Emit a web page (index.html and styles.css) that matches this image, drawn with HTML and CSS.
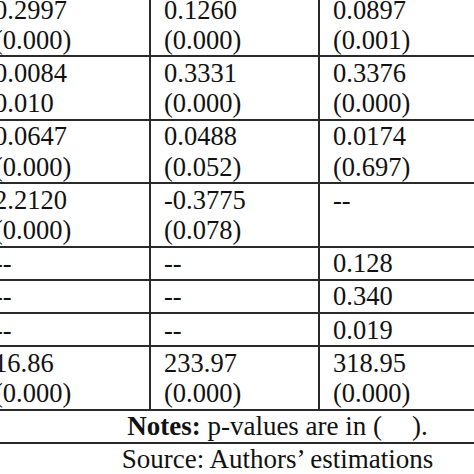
FILE: index.html
```html
<!DOCTYPE html>
<html>
<head>
<meta charset="utf-8">
<link rel="stylesheet" href="styles.css">
</head>
<body>
<div class="frame">
<table class="results">
  <colgroup>
    <col class="c1"><col class="c2"><col class="c3">
  </colgroup>
  <tbody>
    <tr><td>0.2997<br>(0.000)</td><td>0.1260<br>(0.000)</td><td>0.0897<br>(0.001)</td></tr>
    <tr><td>0.0084<br>0.010</td><td>0.3331<br>(0.000)</td><td>0.3376<br>(0.000)</td></tr>
    <tr><td>0.0647<br>(0.000)</td><td>0.0488<br>(0.052)</td><td>0.0174<br>(0.697)</td></tr>
    <tr><td>2.2120<br>(0.000)</td><td>-0.3775<br>(0.078)</td><td>--<br>&nbsp;</td></tr>
    <tr><td>--</td><td>--</td><td>0.128</td></tr>
    <tr><td>--</td><td>--</td><td>0.340</td></tr>
    <tr><td>--</td><td>--</td><td>0.019</td></tr>
    <tr><td>16.86<br>(0.000)</td><td>233.97<br>(0.000)</td><td>318.95<br>(0.000)</td></tr>
    <tr class="note"><td colspan="3"><b>Notes:</b> p-values are in (<span class="gap"></span>).</td></tr>
    <tr class="source"><td colspan="3">Source: Authors’ estimations</td></tr>
  </tbody>
</table>
</div>
</body>
</html>
```
FILE: styles.css
```css
html, body {
  margin: 0;
  padding: 0;
  background: #fff;
  overflow: hidden;
  width: 474px;
  height: 474px;
}
.frame {
  margin-left: -19px;
  margin-top: -6px;
  width: 593px;
}
.results {
  border-collapse: collapse;
  table-layout: fixed;
  width: 593px;
  font-family: "Liberation Serif", "Times New Roman", serif;
  font-size: 26.5px;
  line-height: 30.2px;
  color: #111;
}
.c1 { width: 169px; }
.c2 { width: 169px; }
.c3 { width: 255px; }
.results td {
  padding: 0.5px 13px;
  vertical-align: top;
  text-align: left;
  border-top: 2px solid #2a2a2a;
  border-left: 2px solid #2a2a2a;
  white-space: nowrap;
}
.results tr:first-child td {
  border-top: none;
}
.results td:first-child {
  border-left: none;
}
.results .note td,
.results .source td {
  text-align: center;
  font-size: 27px;
}
.gap {
  display: inline-block;
  width: 30px;
}
```
